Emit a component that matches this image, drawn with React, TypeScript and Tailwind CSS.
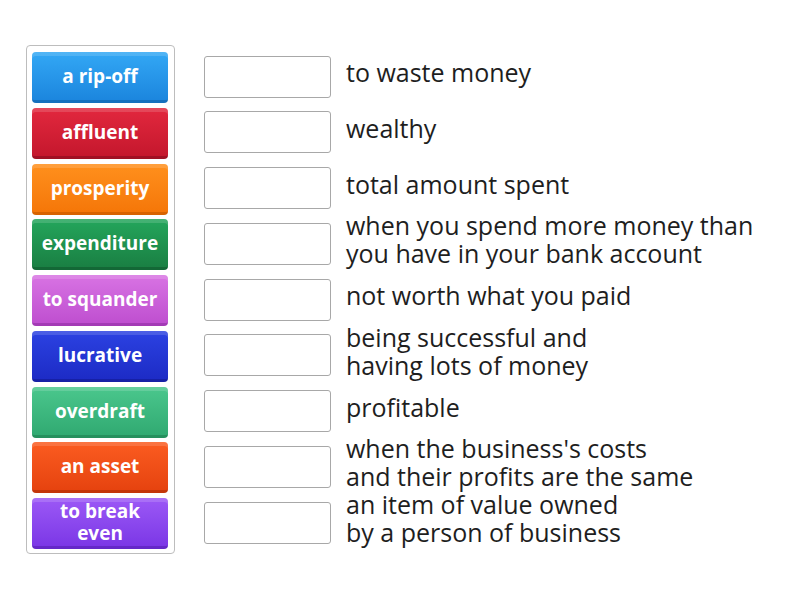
const tiles = [
  { label: "a rip-off", cls: "bg-gradient-to-b from-[#33a8f5] to-[#1c86de] border-[#1670bd]" },
  { label: "affluent", cls: "bg-gradient-to-b from-[#e2283e] to-[#c5172d] border-[#a01024]" },
  { label: "prosperity", cls: "bg-gradient-to-b from-[#ff901c] to-[#f57708] border-[#d86300]" },
  { label: "expenditure", cls: "bg-gradient-to-b from-[#24a65c] to-[#1a8043] border-[#136836]" },
  { label: "to squander", cls: "bg-gradient-to-b from-[#d873e3] to-[#bf4fd0] border-[#a33ab5]" },
  { label: "lucrative", cls: "bg-gradient-to-b from-[#2c42e2] to-[#1d2bc6] border-[#1620a6]" },
  { label: "overdraft", cls: "bg-gradient-to-b from-[#4ac78d] to-[#31aa72] border-[#26905e]" },
  { label: "an asset", cls: "bg-gradient-to-b from-[#fb5c20] to-[#e6430f] border-[#c3360a]" },
  { label: "to break even", cls: "bg-gradient-to-b from-[#9c58f6] to-[#7c37e6] border-[#6528c8]" },
];

const defs = [
  ["to waste money"],
  ["wealthy"],
  ["total amount spent"],
  ["when you spend more money than", "you have in your bank account"],
  ["not worth what you paid"],
  ["being successful and", "having lots of money"],
  ["profitable"],
  ["when the business's costs", "and their profits are the same"],
  ["an item of value owned", "by a person of business"],
];

export default function App() {
  return (
    <div
      className="w-[800px] h-[600px] bg-white flex items-start pt-[45px] pl-[26px]"
      style={{ fontFamily: '"Open Sans", "Liberation Sans", sans-serif' }}
    >
      {/* tile bank */}
      <div className="border border-[#bdbdbd] rounded-[4px] pt-[6px] pb-[4px] pl-[5px] pr-[6px] flex flex-col gap-[4.75px]">
        {tiles.map((t) => (
          <div
            key={t.label}
            className={`w-[136px] h-[51px] rounded-[4px] border-b-[3px] flex items-center justify-center text-center text-white font-bold text-[19px] leading-[22px] px-1 shadow-[inset_0_4px_0_rgba(255,255,255,0.15)] ${t.cls}`}
          >
            {t.label}
          </div>
        ))}
      </div>

      {/* answer rows */}
      <div className="ml-[29px] mt-[6px] flex flex-col gap-[4.75px]">
        {defs.map((lines, i) => (
          <div key={i} className="h-[51px] flex items-center">
            <div className="w-[127px] h-[42px] border border-[#a8a8a8] rounded-[3px] bg-white shrink-0" />
            <div className="ml-[15px] pb-[9px] text-[25px] leading-[28px] text-[#1e1e1e] whitespace-nowrap">
              {lines.map((l) => (
                <div key={l}>{l}</div>
              ))}
            </div>
          </div>
        ))}
      </div>
    </div>
  );
}
